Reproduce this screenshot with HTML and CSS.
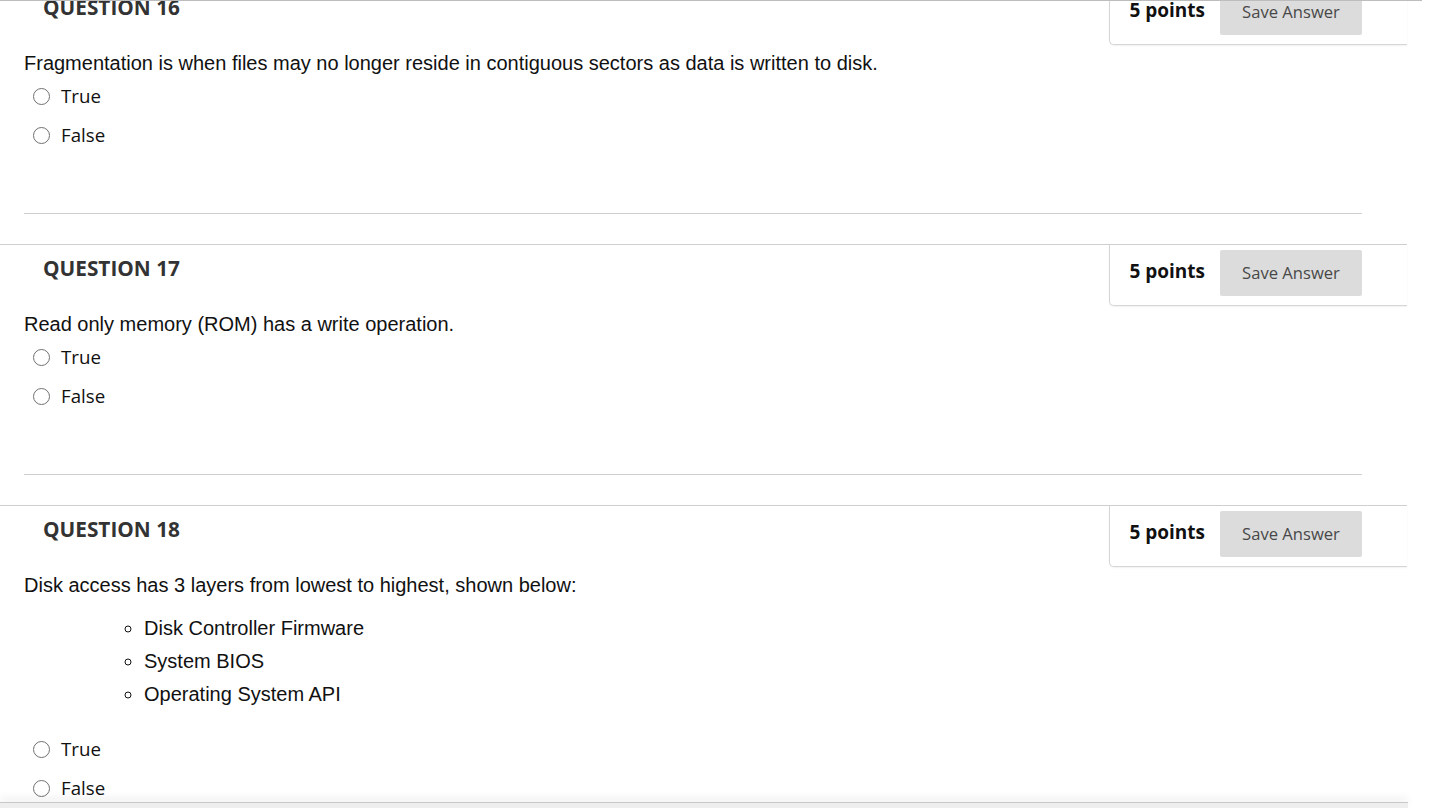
FILE: index.html
```html
<!DOCTYPE html>
<html lang="en">
<head>
<meta charset="utf-8">
<title>Questions</title>
<link rel="stylesheet" href="styles.css">
</head>
<body>
<div class="topline"></div>
<div class="page">
  <section class="question">
    <div class="q-header">
      <h2 class="q-title">QUESTION 16</h2>
      <div class="points-box">
        <span class="points">5 points</span>
        <button class="save-btn" type="button">Save Answer</button>
      </div>
    </div>
    <div class="q-body">
      <p class="q-text">Fragmentation is when files may no longer reside in contiguous sectors as data is written to disk.</p>
      <ul class="options">
        <li class="option"><span class="radio"></span><span class="opt-label">True</span></li>
        <li class="option"><span class="radio"></span><span class="opt-label">False</span></li>
      </ul>
      <div class="sep"></div>
    </div>
  </section>

  <section class="question">
    <div class="q-header">
      <h2 class="q-title">QUESTION 17</h2>
      <div class="points-box">
        <span class="points">5 points</span>
        <button class="save-btn" type="button">Save Answer</button>
      </div>
    </div>
    <div class="q-body">
      <p class="q-text">Read only memory (ROM) has a write operation.</p>
      <ul class="options">
        <li class="option"><span class="radio"></span><span class="opt-label">True</span></li>
        <li class="option"><span class="radio"></span><span class="opt-label">False</span></li>
      </ul>
      <div class="sep"></div>
    </div>
  </section>

  <section class="question">
    <div class="q-header">
      <h2 class="q-title">QUESTION 18</h2>
      <div class="points-box">
        <span class="points">5 points</span>
        <button class="save-btn" type="button">Save Answer</button>
      </div>
    </div>
    <div class="q-body">
      <p class="q-text">Disk access has 3 layers from lowest to highest, shown below:</p>
      <ul class="layers">
        <li>Disk Controller Firmware</li>
        <li>System BIOS</li>
        <li>Operating System API</li>
      </ul>
      <ul class="options options-after-list">
        <li class="option"><span class="radio"></span><span class="opt-label">True</span></li>
        <li class="option"><span class="radio"></span><span class="opt-label">False</span></li>
      </ul>
    </div>
  </section>
</div>
<div class="bottombar"></div>
</body>
</html>
```

FILE: styles.css
```css
html, body {
  margin: 0;
  padding: 0;
  background: #ffffff;
}

body {
  font-family: "Liberation Sans", Arial, sans-serif;
  color: #000;
  overflow: hidden;
}

.topline {
  position: fixed;
  top: 0;
  left: 0;
  width: 1422px;
  height: 1px;
  background: #bdbdbd;
  z-index: 5;
}

.page {
  margin-top: -17px;
  width: 1407px;
}

.question {
  border-top: 1px solid #cfcfcf;
  padding-bottom: 30px;
}

.q-header {
  display: flex;
  justify-content: space-between;
  align-items: flex-start;
}

.q-title {
  margin: 0;
  padding: 11px 0 0 43px;
  font-family: "Open Sans", sans-serif;
  font-weight: 700;
  font-size: 20.8px;
  line-height: 24px;
  color: #333333;
}

.points-box {
  display: flex;
  align-items: center;
  gap: 15px;
  padding: 5px 45px 9px 19px;
  border-left: 1px solid #d6d6d6;
  border-bottom: 1px solid #d6d6d6;
  border-bottom-left-radius: 5px;
  box-shadow: 0 1px 2px rgba(0, 0, 0, 0.06);
  background: #ffffff;
}

.points {
  font-family: "Open Sans", sans-serif;
  font-weight: 700;
  font-size: 19px;
  color: #111111;
  margin-top: -5px;
}

.save-btn {
  width: 142px;
  height: 46px;
  border: none;
  border-radius: 2px;
  background: #dcdcdc;
  color: #484848;
  font-family: "Open Sans", sans-serif;
  font-size: 16.6px;
  padding: 0 0 2px 0;
  cursor: pointer;
}

.q-body {
  padding: 0;
}

.q-text {
  margin: 7px 0 0 24px;
  font-size: 20px;
  line-height: 22px;
  color: #111111;
}

.options {
  list-style: none;
  margin: 2px 0 0 0;
  padding: 0 0 0 33px;
}

.option {
  display: flex;
  align-items: center;
  height: 39px;
}

.radio {
  box-sizing: border-box;
  width: 17px;
  height: 17px;
  margin-top: 1px;
  border: 1.6px solid #707070;
  border-radius: 50%;
  background: #fff;
  flex: none;
}

.opt-label {
  margin-left: 11px;
  font-family: "Open Sans", sans-serif;
  font-size: 18.7px;
  color: #111111;
}

.sep {
  margin: 59px 0 0 24px;
  width: 1338px;
  height: 1px;
  background: #cfcfcf;
}

.layers {
  list-style: circle;
  margin: 16px 0 0 0;
  padding: 0 0 0 144px;
  font-size: 20px;
  line-height: 33px;
  color: #111111;
}

.options-after-list {
  margin-top: 18px;
}

.bottombar {
  position: fixed;
  left: 0;
  bottom: 0;
  width: 1408px;
  height: 5px;
  background: #eeeeee;
  border-top: 1px solid #c8c8c8;
  box-shadow: 0 -4px 8px rgba(0, 0, 0, 0.07);
  z-index: 5;
}
```
